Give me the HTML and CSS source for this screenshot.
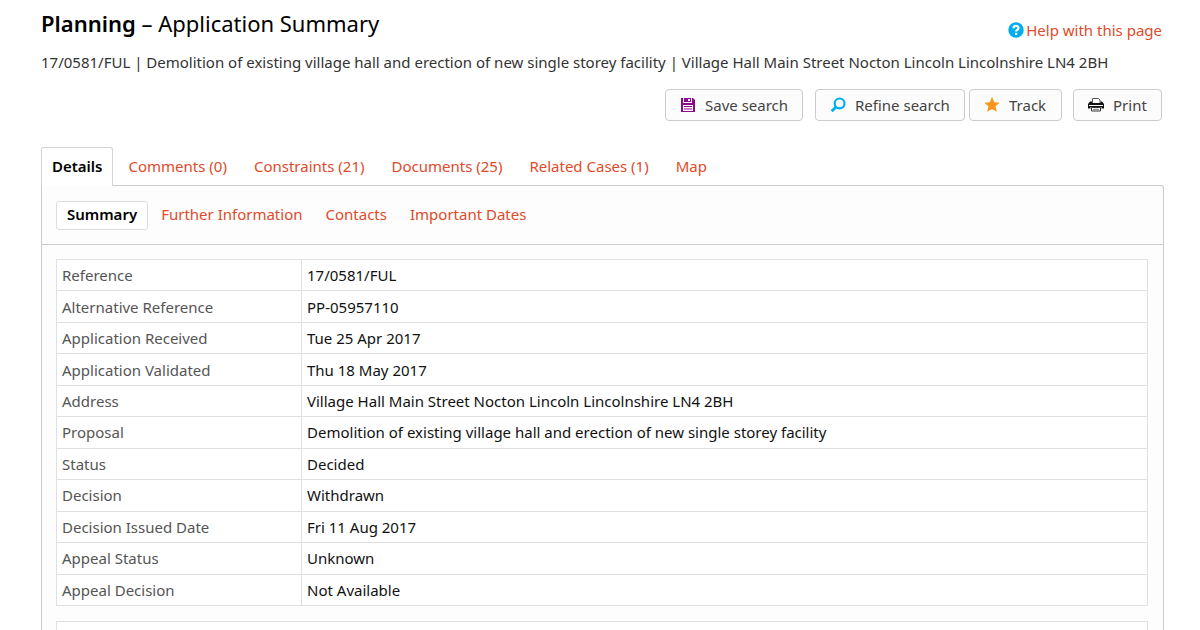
FILE: index.html
```html
<!DOCTYPE html>
<html lang="en">
<head>
<meta charset="utf-8">
<title>Planning – Application Summary</title>
<link rel="stylesheet" href="styles.css">
</head>
<body>
<main class="page">
  <header class="header">
    <h1 class="title"><strong>Planning</strong> – Application Summary</h1>
    <a class="help" href="#help">
      <svg width="16" height="16" viewBox="0 0 16 16" aria-hidden="true"><circle cx="8" cy="8" r="7.7" fill="#00aeef"/><path d="M5.6 6.2C5.6 3.2 10.5 3.2 10.5 6c0 1.800-2.400 1.800-2.400 3.600" fill="none" stroke="#fff" stroke-width="2.2"/><path d="M7 10.800h2.200v2.200H7z" fill="#fff"/></svg>
      <span>Help with this page</span>
    </a>
  </header>
  <p class="description">17/0581/FUL | Demolition of existing village hall and erection of new single storey facility | Village Hall Main Street Nocton Lincoln Lincolnshire LN4 2BH</p>
  <div class="actions">
    <button class="action action-save" type="button">
      <svg width="16" height="16" viewBox="0 0 16 16" aria-hidden="true"><path fill="#8b0a8b" fill-rule="evenodd" d="M1 1h2v5h9V1h1l2 2v12H1zM4 1h7v4H4zM8 2v2h2V2zM3 8v6h10V8z"/><path d="M4 9.500h8M4 12h8" stroke="#8b0a8b" stroke-width="1"/></svg>
      <span>Save search</span>
    </button>
    <button class="action action-refine" type="button">
      <svg width="16" height="16" viewBox="0 0 16 16" aria-hidden="true"><circle cx="9.600" cy="6.400" r="4.900" fill="none" stroke="#00aeef" stroke-width="2.200"/><path d="M6 9.900L1.700 14.200" stroke="#00aeef" stroke-width="2.800"/></svg>
      <span>Refine search</span>
    </button>
    <button class="action action-track" type="button">
      <svg width="16" height="16" viewBox="0 0 16 16" aria-hidden="true"><path fill="#f7941d" d="M8 0l2.200 5.200 5.500.500-4.200 3.600 1.400 5.500L8 12l-4.900 2.800 1.400-5.500L.3 5.700l5.500-.5z"/></svg>
      <span>Track</span>
    </button>
    <button class="action action-print" type="button">
      <svg width="16" height="16" viewBox="0 0 16 16" aria-hidden="true"><path d="M4.500 6V1.500h6l1.500 1.500v3" fill="#fff" stroke="#555" stroke-width="1"/><path fill="#111" d="M2 4.500h2V6h8.500V4.500H14L16 7v4.500h-2.500V10h-11v1.500H0V7z"/><path d="M1 8.500h14" stroke="#fff" stroke-width="1"/><path d="M3.500 10.500h9V14h-9z" fill="#fff" stroke="#333" stroke-width="1"/><path d="M5 12.300h6" stroke="#777" stroke-width="1"/></svg>
      <span>Print</span>
    </button>
  </div>

  <nav class="tabs" aria-label="Application">
    <a class="tab tab-active" href="#details" aria-current="page">Details</a>
    <a class="tab" href="#comments">Comments (0)</a>
    <a class="tab" href="#constraints">Constraints (21)</a>
    <a class="tab" href="#documents">Documents (25)</a>
    <a class="tab" href="#related">Related Cases (1)</a>
    <a class="tab" href="#map">Map</a>
  </nav>
  <section class="panel">
    <nav class="subtabs" aria-label="Details">
      <a class="subtab subtab-active" href="#summary" aria-current="page">Summary</a>
      <a class="subtab" href="#further">Further Information</a>
      <a class="subtab" href="#contacts">Contacts</a>
      <a class="subtab" href="#dates">Important Dates</a>
    </nav>
    <div class="content">
      <table class="details">
        <tbody>
          <tr><th scope="row">Reference</th><td>17/0581/FUL</td></tr>
          <tr><th scope="row">Alternative Reference</th><td>PP-05957110</td></tr>
          <tr><th scope="row">Application Received</th><td>Tue 25 Apr 2017</td></tr>
          <tr><th scope="row">Application Validated</th><td>Thu 18 May 2017</td></tr>
          <tr><th scope="row">Address</th><td>Village Hall Main Street Nocton Lincoln Lincolnshire LN4 2BH</td></tr>
          <tr><th scope="row">Proposal</th><td>Demolition of existing village hall and erection of new single storey facility</td></tr>
          <tr><th scope="row">Status</th><td>Decided</td></tr>
          <tr><th scope="row">Decision</th><td>Withdrawn</td></tr>
          <tr><th scope="row">Decision Issued Date</th><td>Fri 11 Aug 2017</td></tr>
          <tr><th scope="row">Appeal Status</th><td>Unknown</td></tr>
          <tr><th scope="row">Appeal Decision</th><td>Not Available</td></tr>
        </tbody>
      </table>
      <div class="next-box"></div>
    </div>
  </section>
</main>
</body>
</html>
```
FILE: styles.css
```css
* { box-sizing: border-box; }
body {
  margin: 0;
  background: #fff;
  color: #111;
  font: 15px/20px "Noto Sans", "Open Sans", sans-serif;
  height: 100vh;
  overflow: hidden;
}
a { color: #e04a2a; text-decoration: none; }
.page { padding: 7px 36px 0 41px; }
.header { display: flex; justify-content: space-between; padding-right: 2px; }
.title { margin: 0; font-size: 22px; line-height: 32px; font-weight: 400; color: #000; }
.title strong { font-weight: 600; }
.help { display: flex; align-items: center; gap: 2px; height: 30px; margin-top: 8px; }
.description { margin: 7px 0 17px; color: #333; white-space: nowrap; }
.actions { display: flex; justify-content: flex-end; padding-right: 2px; }
.action {
  display: flex;
  align-items: center;
  gap: 9px;
  height: 32px;
  padding: 0 14px 1px;
  border: 1px solid #ccc;
  border-radius: 4px;
  background: #fcfcfc;
  color: #444;
  font: inherit;
  white-space: nowrap;
}
.action svg { flex: none; }
.action-save { width: 138px; margin-right: 12px; }
.action-refine { width: 150px; margin-right: 4px; }
.action-track { width: 93px; margin-right: 11px; }
.action-print { width: 89px; }
.tabs { display: flex; margin-top: 26px; gap: 5px; }
.tab { padding: 9px 11px; line-height: 20px; white-space: nowrap; }
.tab-active {
  position: relative;
  z-index: 1;
  margin-bottom: -1px;
  padding: 8px 9px 10px 10px;
  border: 1px solid #d5d5d5;
  border-bottom: 0;
  border-radius: 3px 3px 0 0;
  background: #fff;
  color: #000;
  font-weight: 600;
}
.panel { border: 1px solid #ccc; border-bottom: 0; border-radius: 0 3px 0 0; background: #fdfdfd; }
.subtabs { display: flex; gap: 3px; padding: 15px 15px 14px 14px; border-bottom: 1px solid #ccc; }
.subtab { padding: 3px 10px 5px; line-height: 20px; white-space: nowrap; }
.subtab-active { padding-top: 2px; border: 1px solid #ddd; border-radius: 3px; background: #fff; color: #000; font-weight: 600; }
.content { padding: 14px 15px 15px 14px; }
.details { width: 100%; height: 347px; border-collapse: collapse; table-layout: fixed; background: #fff; }
.details th, .details td { padding: 5px; border: 1px solid #e0e0e0; text-align: left; font-weight: 400; }
.details th { width: 245px; color: #555; }
.next-box { height: 40px; margin-top: 15px; border: 1px solid #e0e0e0; background: #fff; }
```
